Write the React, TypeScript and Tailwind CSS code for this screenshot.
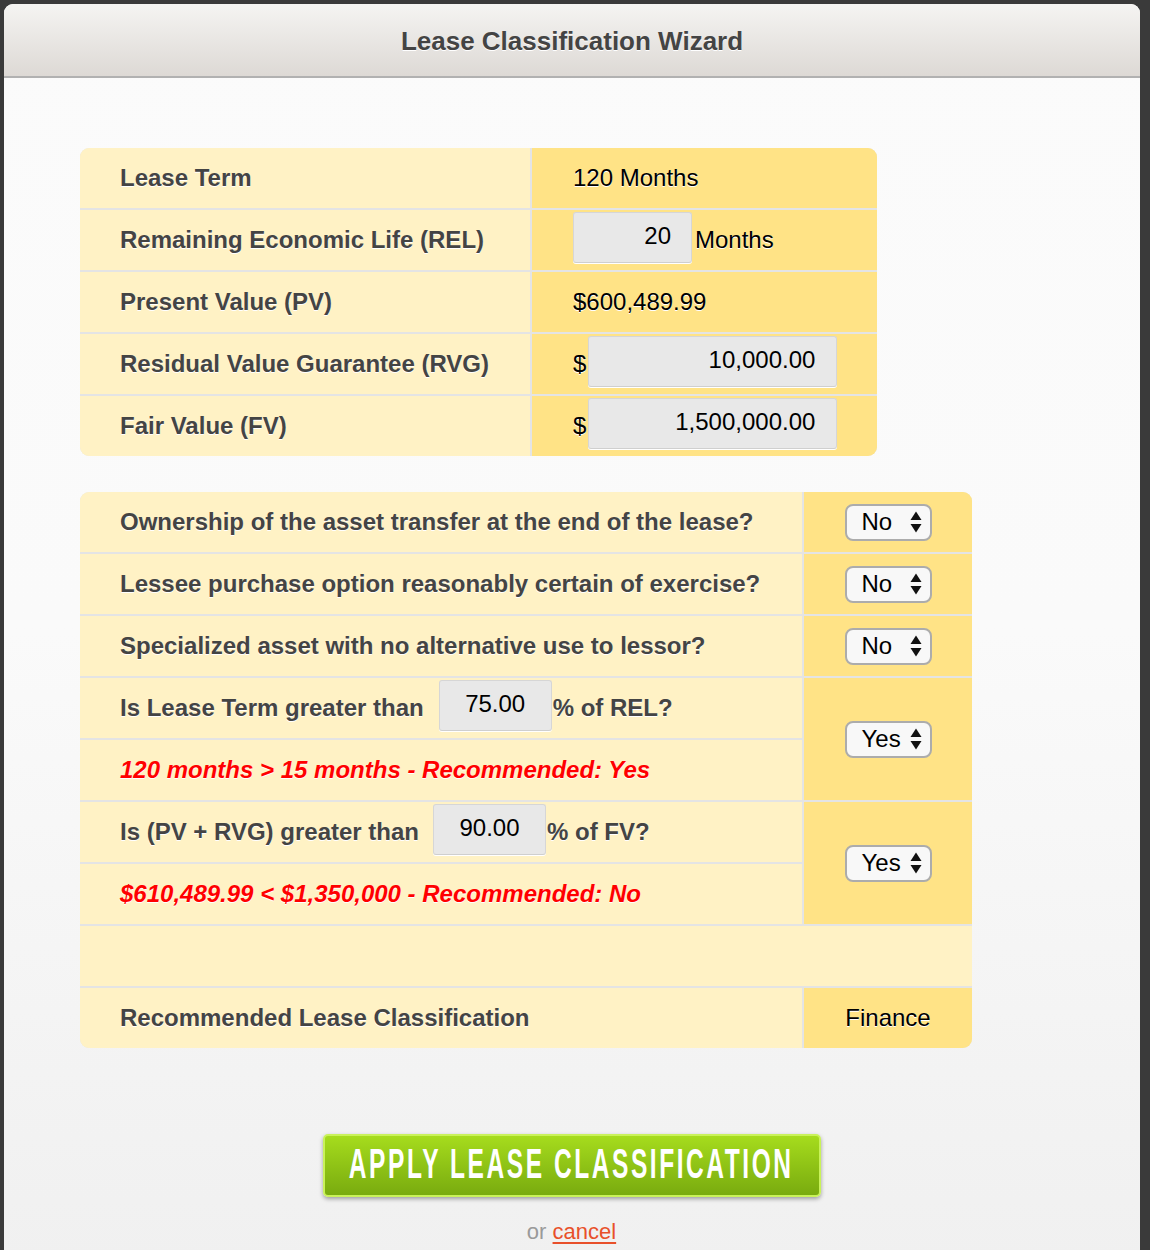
import type { ReactNode } from 'react'

const LABEL = 'text-[24px] font-bold text-[#444] [text-shadow:0_1px_0_#fff]'
const VALUE = 'text-[24px] text-black [text-shadow:0_1px_0_#fff]'
const WARN = 'text-[24px] font-bold italic text-[#ff0000] [text-shadow:0_1px_0_#fff]'
const FIELD =
  'h-[51px] self-start mt-[2px] rounded-[3px] border border-[#d6d6d6] border-b-[#cfcfcf] bg-[#e8e8e8] text-[24px] leading-[46px] text-black shadow-[0_1px_0_#fff]'

function Arrows() {
  return (
    <svg width="12" height="22" viewBox="0 0 12 22" className="block">
      <path d="M0.5 9 L6 0.5 L11.5 9 Z" fill="#111" />
      <path d="M0.5 13 L11.5 13 L6 21.5 Z" fill="#111" />
    </svg>
  )
}

function Select({ value }: { value: string }) {
  return (
    <div className="flex h-[37px] w-[87px] items-center rounded-[8px] border-2 border-[#acacac] bg-[#f8f8f8] pl-[15px] pr-[8px]">
      <span className="flex-1 text-[24px] leading-none text-black">{value}</span>
      <Arrows />
    </div>
  )
}

function Field({ value, className }: { value: string; className: string }) {
  return <div className={`${FIELD} ${className}`}>{value}</div>
}

const summary: { label: string; value: ReactNode }[] = [
  { label: 'Lease Term', value: <span className={VALUE}>120 Months</span> },
  {
    label: 'Remaining Economic Life (REL)',
    value: (
      <div className="flex h-full items-center">
        <Field value="20" className="w-[119px] pr-[20px] text-right" />
        <span className={`${VALUE} ml-[3px]`}>Months</span>
      </div>
    ),
  },
  { label: 'Present Value (PV)', value: <span className={VALUE}>$600,489.99</span> },
  {
    label: 'Residual Value Guarantee (RVG)',
    value: (
      <div className="flex h-full items-center">
        <span className={VALUE}>$</span>
        <Field value="10,000.00" className="ml-[2px] w-[249px] pr-[21px] text-right" />
      </div>
    ),
  },
  {
    label: 'Fair Value (FV)',
    value: (
      <div className="flex h-full items-center">
        <span className={VALUE}>$</span>
        <Field value="1,500,000.00" className="ml-[2px] w-[249px] pr-[21px] text-right" />
      </div>
    ),
  },
]

const questions = [
  'Ownership of the asset transfer at the end of the lease?',
  'Lessee purchase option reasonably certain of exercise?',
  'Specialized asset with no alternative use to lessor?',
]

const left = 'flex items-center bg-[#fff2c5] pl-[40px]'
const right = 'flex items-center justify-center bg-[#ffe386]'

export default function App() {
  return (
    <div className="h-[1250px] overflow-hidden bg-[#3a3a3a] pl-[4px] pt-[4px] font-['Liberation_Sans',Arial,sans-serif]">
      <div className="flex h-[1260px] w-[1136px] flex-col overflow-hidden rounded-t-[9px] bg-gradient-to-b from-[#fbfbfb] via-[#fafafa] to-[#f0f0f0]">
        {/* header */}
        <div className="flex h-[74px] shrink-0 items-center justify-center border-b-2 border-[#b1b1b1] bg-gradient-to-b from-[#f5f4f2] to-[#ddd9d5] pt-[2px]">
          <h1 className="text-[26px] font-bold text-[#444] [text-shadow:0_1px_0_#fff]">Lease Classification Wizard</h1>
        </div>

        <div className="flex flex-col pl-[76px] pt-[70px]">
          {/* lease figures */}
          <div className="grid w-[797px] grid-cols-[450px_345px] gap-[2px] overflow-hidden rounded-[9px] bg-[#e4e4e4]">
            {summary.map((r) => (
              <div key={r.label} className="contents">
                <div className={`${left} h-[60px]`}>
                  <span className={LABEL}>{r.label}</span>
                </div>
                <div className="flex h-[60px] items-center bg-[#ffe386] pl-[41px]">{r.value}</div>
              </div>
            ))}
          </div>

          {/* classification criteria */}
          <div className="mt-[36px] grid w-[892px] grid-cols-[722px_168px] grid-rows-[repeat(9,60px)] gap-[2px] overflow-hidden rounded-[9px] bg-[#e4e4e4]">
            {questions.map((q) => (
              <div key={q} className="contents">
                <div className={left}>
                  <span className={LABEL}>{q}</span>
                </div>
                <div className={right}>
                  <Select value="No" />
                </div>
              </div>
            ))}

            <div className={left}>
              <span className={LABEL}>Is Lease Term greater than</span>
              <Field value="75.00" className="ml-[15px] w-[113px] text-center" />
              <span className={`${LABEL} ml-[1px]`}>% of REL?</span>
            </div>
            <div className={`${right} row-span-2`}>
              <Select value="Yes" />
            </div>
            <div className={left}>
              <span className={WARN}>120 months &gt; 15 months - Recommended: Yes</span>
            </div>

            <div className={left}>
              <span className={LABEL}>Is (PV + RVG) greater than</span>
              <Field value="90.00" className="ml-[14px] w-[113px] text-center" />
              <span className={`${LABEL} ml-[1px]`}>% of FV?</span>
            </div>
            <div className={`${right} row-span-2`}>
              <Select value="Yes" />
            </div>
            <div className={left}>
              <span className={WARN}>$610,489.99 &lt; $1,350,000 - Recommended: No</span>
            </div>

            <div className="col-span-2 bg-[#fff2c5]" />

            <div className={left}>
              <span className={LABEL}>Recommended Lease Classification</span>
            </div>
            <div className={right}>
              <span className={VALUE}>Finance</span>
            </div>
          </div>
        </div>

        {/* actions */}
        <div className="mt-[86px] flex flex-col items-center pr-[1px]">
          <button className="flex h-[63px] w-[498px] items-center justify-center overflow-hidden rounded-[5px] border-2 border-[#c9f25a] bg-gradient-to-b from-[#a6dc1d] to-[#79ab0f] pb-[4px] shadow-[0_2px_4px_rgba(0,0,0,0.35)]">
            <span className="inline-block scale-x-[0.57] whitespace-nowrap text-[43px] font-bold uppercase leading-none tracking-[4.5px] text-white">
              Apply Lease Classification
            </span>
          </button>
          <div className="mt-[18px] text-[22px] text-[#9a9a9a]">
            or{' '}
            <a href="#" className="text-[#e8502a] underline underline-offset-[3px]">
              cancel
            </a>
          </div>
        </div>
      </div>
    </div>
  )
}
